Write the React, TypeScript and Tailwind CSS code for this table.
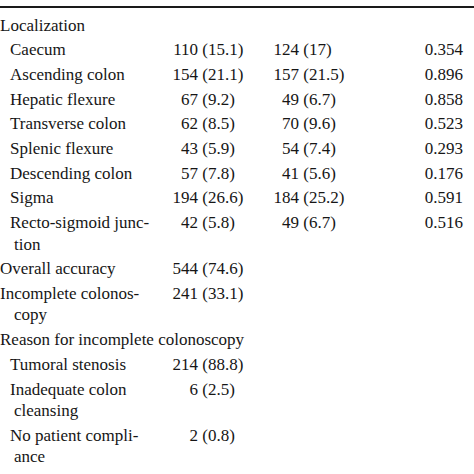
import React from 'react';

type Row = {
  lines: string[];
  level: 0 | 1;
  a?: [string, string];
  b?: [string, string];
  p?: string;
};

const ROWS: Row[] = [
  { lines: ['Localization'], level: 0 },
  { lines: ['Caecum'], level: 1, a: ['110', ' (15.1)'], b: ['124', ' (17)'], p: '0.354' },
  { lines: ['Ascending colon'], level: 1, a: ['154', ' (21.1)'], b: ['157', ' (21.5)'], p: '0.896' },
  { lines: ['Hepatic flexure'], level: 1, a: ['67', ' (9.2)'], b: ['49', ' (6.7)'], p: '0.858' },
  { lines: ['Transverse colon'], level: 1, a: ['62', ' (8.5)'], b: ['70', ' (9.6)'], p: '0.523' },
  { lines: ['Splenic flexure'], level: 1, a: ['43', ' (5.9)'], b: ['54', ' (7.4)'], p: '0.293' },
  { lines: ['Descending colon'], level: 1, a: ['57', ' (7.8)'], b: ['41', ' (5.6)'], p: '0.176' },
  { lines: ['Sigma'], level: 1, a: ['194', ' (26.6)'], b: ['184', ' (25.2)'], p: '0.591' },
  { lines: ['Recto-sigmoid junc-', 'tion'], level: 1, a: ['42', ' (5.8)'], b: ['49', ' (6.7)'], p: '0.516' },
  { lines: ['Overall accuracy'], level: 0, a: ['544', ' (74.6)'] },
  { lines: ['Incomplete colonos-', 'copy'], level: 0, a: ['241', ' (33.1)'] },
  { lines: ['Reason for incomplete colonoscopy'], level: 0 },
  { lines: ['Tumoral stenosis'], level: 1, a: ['214', ' (88.8)'] },
  { lines: ['Inadequate colon', 'cleansing'], level: 1, a: ['6', ' (2.5)'] },
  { lines: ['No patient compli-', 'ance'], level: 1, a: ['2', ' (0.8)'] },
  { lines: ['Intestinal bleeding'], level: 1, a: ['4', ' (1.7)'] },
];

function Cell({ v }: { v?: [string, string] }) {
  return (
    <>
      <span className="text-right">{v ? v[0] : ''}</span>
      <span className="whitespace-pre">{v ? v[1] : ''}</span>
    </>
  );
}

export default function App() {
  return (
    <div
      className="w-[474px] h-[474px] overflow-hidden bg-white text-[#161616] text-[17px] leading-[21.5px]"
      style={{ fontFamily: '"Liberation Serif", "Times New Roman", serif' }}
    >
      <div className="mt-[6px] border-t-2 border-[#1a1a1a]" />
      <div className="pt-[5px]">
        {ROWS.map((r, i) => (
          <div key={i} className="grid grid-cols-[170px_28px_74px_27px_101px_63px] py-[1.6px]">
            <div className={r.level === 1 ? 'pl-[10px]' : 'pl-0'}>
              {r.lines.map((l, j) => (
                <div key={j} className={j > 0 ? (r.level === 1 ? 'pl-[4px] whitespace-nowrap' : 'pl-[14px] whitespace-nowrap') : 'whitespace-nowrap'}>
                  {l}
                </div>
              ))}
            </div>
            <Cell v={r.a} />
            <Cell v={r.b} />
            <span className="text-right">{r.p ?? ''}</span>
          </div>
        ))}
      </div>
    </div>
  );
}
